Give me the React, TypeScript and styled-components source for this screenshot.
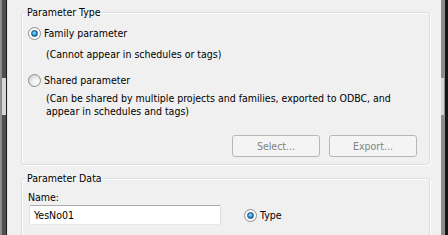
import React from "react";
import styled, { createGlobalStyle } from "styled-components";

const GlobalStyle = createGlobalStyle`
  html, body {
    margin: 0;
    padding: 0;
    background: #f0f0f0;
    width: 448px;
    height: 235px;
    overflow: hidden;
  }
  body {
    font-family: "DejaVu Sans Condensed", "DejaVu Sans", sans-serif;
    font-stretch: condensed;
    font-size: 10.5px;
    line-height: 13px;
    color: #000;
  }
`;

const Page = styled.div`
  display: flex;
  width: 448px;
  height: 235px;
`;

const EdgeStrip = styled.div<{ $side: "left" | "right" }>`
  flex: none;
  position: relative;
  width: ${(p) => (p.$side === "left" ? 8 : 7)}px;
  height: 100%;
  background: ${(p) =>
    p.$side === "left"
      ? "linear-gradient(to right, #8c8c8c 0 2px, #4f4f4f 2px 6px, #1c1c1c 6px 7px, #e6e6e6 7px 8px)"
      : "linear-gradient(to right, #8d8d8d 0 4px, #161616 4px 7px)"};
  &::after {
    content: "";
    position: absolute;
    top: 78px;
    height: 37px;
    ${(p) => (p.$side === "left" ? "left: 2px; width: 4px;" : "left: 0; width: 3px;")}
    background: #d6d6d6;
  }
`;

const Main = styled.div`
  flex: 1;
  display: flex;
  flex-direction: column;
  gap: 7px;
  padding: 6px 11px 0 13px;
  min-width: 0;
`;

const Group = styled.fieldset`
  margin: 0;
  padding: 0;
  border: 1px solid #d5dfe5;
  border-radius: 3px;
  box-shadow: inset 1px 1px 0 #ffffff, 1px 1px 0 #ffffff;
  min-width: 0;
`;

const Legend = styled.legend`
  margin-left: 4px;
  padding: 0 1px;
  line-height: 13px;
`;

const GroupBody = styled.div<{ $pt: number; $pb: number }>`
  display: flex;
  flex-direction: column;
  padding: ${(p) => p.$pt}px 12px ${(p) => p.$pb}px 6px;
`;

const RadioRow = styled.label<{ $mt?: number }>`
  display: flex;
  align-items: center;
  gap: 3px;
  height: 13px;
  margin-top: ${(p) => p.$mt ?? 0}px;
  white-space: nowrap;
`;

const RadioMark = styled.span<{ $checked?: boolean }>`
  position: relative;
  flex: none;
  width: 13px;
  height: 13px;
  box-sizing: border-box;
  border-radius: 50%;
  border: 1px solid #8e8f8f;
  background: ${(p) =>
    p.$checked
      ? "radial-gradient(circle at 50% 50%, #ffffff 0 55%, #e8e8e8 100%)"
      : "radial-gradient(circle at 65% 65%, #f8f8f8 0 25%, #d9d9d9 70%, #c9c9c9 100%)"};
  &::after {
    content: "";
    display: ${(p) => (p.$checked ? "block" : "none")};
    position: absolute;
    left: 2px;
    top: 2px;
    width: 7px;
    height: 7px;
    box-sizing: border-box;
    border-radius: 50%;
    border: 1px solid #1c4c74;
    background: radial-gradient(circle at 45% 40%, #a6e6ff 0, #3aa6e6 40%, #0f5d9c 85%);
  }
`;

const Desc = styled.div<{ $mt: number }>`
  margin-top: ${(p) => p.$mt}px;
  padding-left: 18px;
  line-height: 13px;
`;

const ButtonRow = styled.div`
  display: flex;
  justify-content: flex-end;
  gap: 9px;
  margin-top: 17px;
`;

const DisabledButton = styled.button`
  width: 88px;
  height: 22px;
  box-sizing: border-box;
  padding: 0;
  border: 1px solid #b5b8ba;
  border-radius: 3px;
  background: #f4f4f4;
  color: #838383;
  font: inherit;
  line-height: 13px;
`;

const FieldLabel = styled.div`
  line-height: 13px;
`;

const InputRow = styled.div`
  display: flex;
  align-items: center;
  gap: 23px;
  margin-top: 1px;
  padding-left: 1px;
`;

const TextBox = styled.div`
  width: 192px;
  height: 20px;
  box-sizing: border-box;
  border: 1px solid;
  border-color: #abadb3 #dbdfe6 #e3e9ef #e2e3ea;
  border-radius: 2px;
  background: #ffffff;
  padding: 0 4px;
  display: flex;
  align-items: center;
`;

export default function App() {
  return (
    <>
      <GlobalStyle />
      <Page>
        <EdgeStrip $side="left" />
        <Main>
          <Group>
            <Legend>Parameter Type</Legend>
            <GroupBody $pt={8} $pb={7}>
              <RadioRow>
                <RadioMark $checked />
                Family parameter
              </RadioRow>
              <Desc $mt={8}>(Cannot appear in schedules or tags)</Desc>
              <RadioRow $mt={13}>
                <RadioMark />
                Shared parameter
              </RadioRow>
              <Desc $mt={5}>
                (Can be shared by multiple projects and families, exported to ODBC, and
                <br />
                appear in schedules and tags)
              </Desc>
              <ButtonRow>
                <DisabledButton disabled>Select...</DisabledButton>
                <DisabledButton disabled>Export...</DisabledButton>
              </ButtonRow>
            </GroupBody>
          </Group>
          <Group>
            <Legend>Parameter Data</Legend>
            <GroupBody $pt={6} $pb={20}>
              <FieldLabel>Name:</FieldLabel>
              <InputRow>
                <TextBox>YesNo01</TextBox>
                <RadioRow>
                  <RadioMark $checked />
                  Type
                </RadioRow>
              </InputRow>
            </GroupBody>
          </Group>
        </Main>
        <EdgeStrip $side="right" />
      </Page>
    </>
  );
}
